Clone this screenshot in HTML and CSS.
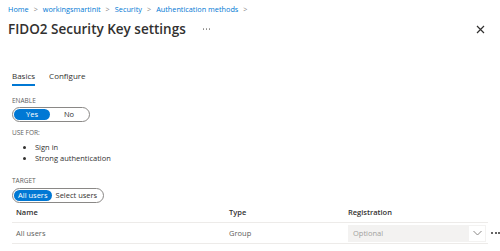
FILE: index.html
```html
<!DOCTYPE html>
<html lang="en">
<head>
  <meta charset="UTF-8" />
  <title>FIDO2 Security Key settings</title>
  <link rel="stylesheet" href="styles.css">
</head>
<body>

  <nav class="crumbs">
    <a>Home</a><span class="sep">&gt;</span>
    <a>workingsmartinit</a><span class="sep">&gt;</span>
    <a>Security</a><span class="sep">&gt;</span>
    <a>Authentication methods</a><span class="sep">&gt;</span>
  </nav>

  <header class="title-bar">
    <h1>FIDO2 Security Key settings</h1>
    <span class="more"><i></i><i></i><i></i></span>
    <span class="close">
      <svg width="9" height="9" viewBox="0 0 9 9"><path d="M1 1L8 8M8 1L1 8" stroke="#323130" stroke-width="1.2"/></svg>
    </span>
  </header>

  <div class="content">
    <div class="tabs">
      <span class="tab active">Basics</span>
      <span class="tab">Configure</span>
    </div>

    <div class="label enable-label">ENABLE</div>
    <div class="toggle enable">
      <span class="opt on">Yes</span>
      <span class="opt">No</span>
    </div>

    <div class="label use">USE FOR:</div>
    <ul class="uses">
      <li>Sign in</li>
      <li>Strong authentication</li>
    </ul>

    <div class="label target">TARGET</div>
    <div class="toggle">
      <span class="opt on">All users</span>
      <span class="opt">Select users</span>
    </div>

    <div class="table">
      <div class="row head">
        <span class="c-name">Name</span>
        <span class="c-type">Type</span>
        <span class="c-reg">Registration</span>
      </div>
      <div class="row">
        <span class="c-name">All users</span>
        <span class="c-type">Group</span>
        <span class="c-reg">
          <span class="select">
            <span class="value">Optional</span>
            <span class="chev">
              <svg width="9" height="6" viewBox="0 0 9 6"><path d="M0.5 1L4.5 5L8.5 1" fill="none" stroke="#8a8886" stroke-width="1"/></svg>
            </span>
          </span>
          <span class="dots"><i></i><i></i><i></i></span>
        </span>
      </div>
    </div>
  </div>

</body>
</html>
```

FILE: styles.css
```css
body {
  font-family: 'Open Sans', sans-serif;
  color: #323130;
  background: #fff;
  margin: 0;
  font-size: 7.5px;
  overflow: hidden;
}

.crumbs {
  display: flex;
  align-items: center;
  height: 18px;
  padding: 0 8px;
  font-size: 7.3px;
  color: #0078d4;
}

.crumbs .sep {
  color: #8a8886;
  margin: 0 5px;
}

.title-bar {
  display: flex;
  align-items: center;
  height: 22px;
  padding: 0 8px;
}

h1 {
  margin: 0;
  font-size: 13.5px;
  font-weight: 600;
  color: #323130;
}

.more, .dots {
  display: flex;
  gap: 1.5px;
  align-items: center;
}

.more {
  margin-left: 17px;
}

.more i, .dots i {
  width: 1.5px;
  height: 1.5px;
  background: #8a8886;
  border-radius: 50%;
}

.dots {
  margin-left: 5px;
}

.dots i {
  width: 2px;
  height: 2px;
  background: #323130;
}

.close {
  margin-left: auto;
  margin-right: 7px;
  display: flex;
}

.content {
  padding: 29px 12px 0;
}

.tabs {
  display: flex;
  gap: 14px;
  font-size: 8px;
  height: 17px;
}

.tab {
  height: 15px;
  line-height: 14px;
}

.tab.active {
  border-bottom: 2px solid #0078d4;
}

.label {
  margin-top: 7px;
  font-size: 6.5px;
  color: #605e5c;
  height: 9px;
  line-height: 9px;
}

.label.enable-label {
  margin-top: 10px;
}

.toggle {
  display: inline-flex;
  align-items: center;
  border: 1px solid #8a8886;
  border-radius: 8px;
  padding: 1px;
  margin-top: 2px;
  height: 11px;
}

.toggle .opt {
  font-size: 7.5px;
  padding: 0 4px;
  height: 11px;
  line-height: 11px;
  border-radius: 6px;
  color: #323130;
}

.toggle .opt.on {
  background: #0078d4;
  color: #fff;
}

.enable .opt {
  width: 28px;
  text-align: center;
}

.enable .opt + .opt {
  width: 30px;
}

.label.use {
  margin-top: 6px;
}

.uses {
  margin: 5px 0 0;
  padding-left: 23px;
  font-size: 7.5px;
}

.uses li {
  line-height: 11px;
}

.label.target {
  margin-top: 12px;
}

.label.target + .toggle {
  margin-top: 3px;
  padding: 1px 2px 1px 1px;
}

.table {
  margin-top: -1px;
}

.row {
  display: flex;
  align-items: center;
  height: 20px;
  border-bottom: 1px solid #edebe9;
  font-size: 7.5px;
  color: #605e5c;
}

.row.head {
  height: 20px;
  font-weight: 600;
  color: #323130;
}

.row > span {
  flex-shrink: 0;
}

.c-name {
  width: 213px;
  padding-left: 4px;
}

.c-type {
  width: 119px;
}

.c-reg {
  display: flex;
  align-items: center;
}

.select {
  display: flex;
  align-items: center;
  width: 138px;
  height: 17px;
  background: #f3f2f1;
}

.select .value {
  flex: 1;
  padding-left: 5px;
  color: #a19f9d;
}

.chev {
  display: flex;
  align-items: center;
  justify-content: center;
  width: 16px;
  height: 15px;
  margin-right: 1px;
  background: #fff;
}
```
